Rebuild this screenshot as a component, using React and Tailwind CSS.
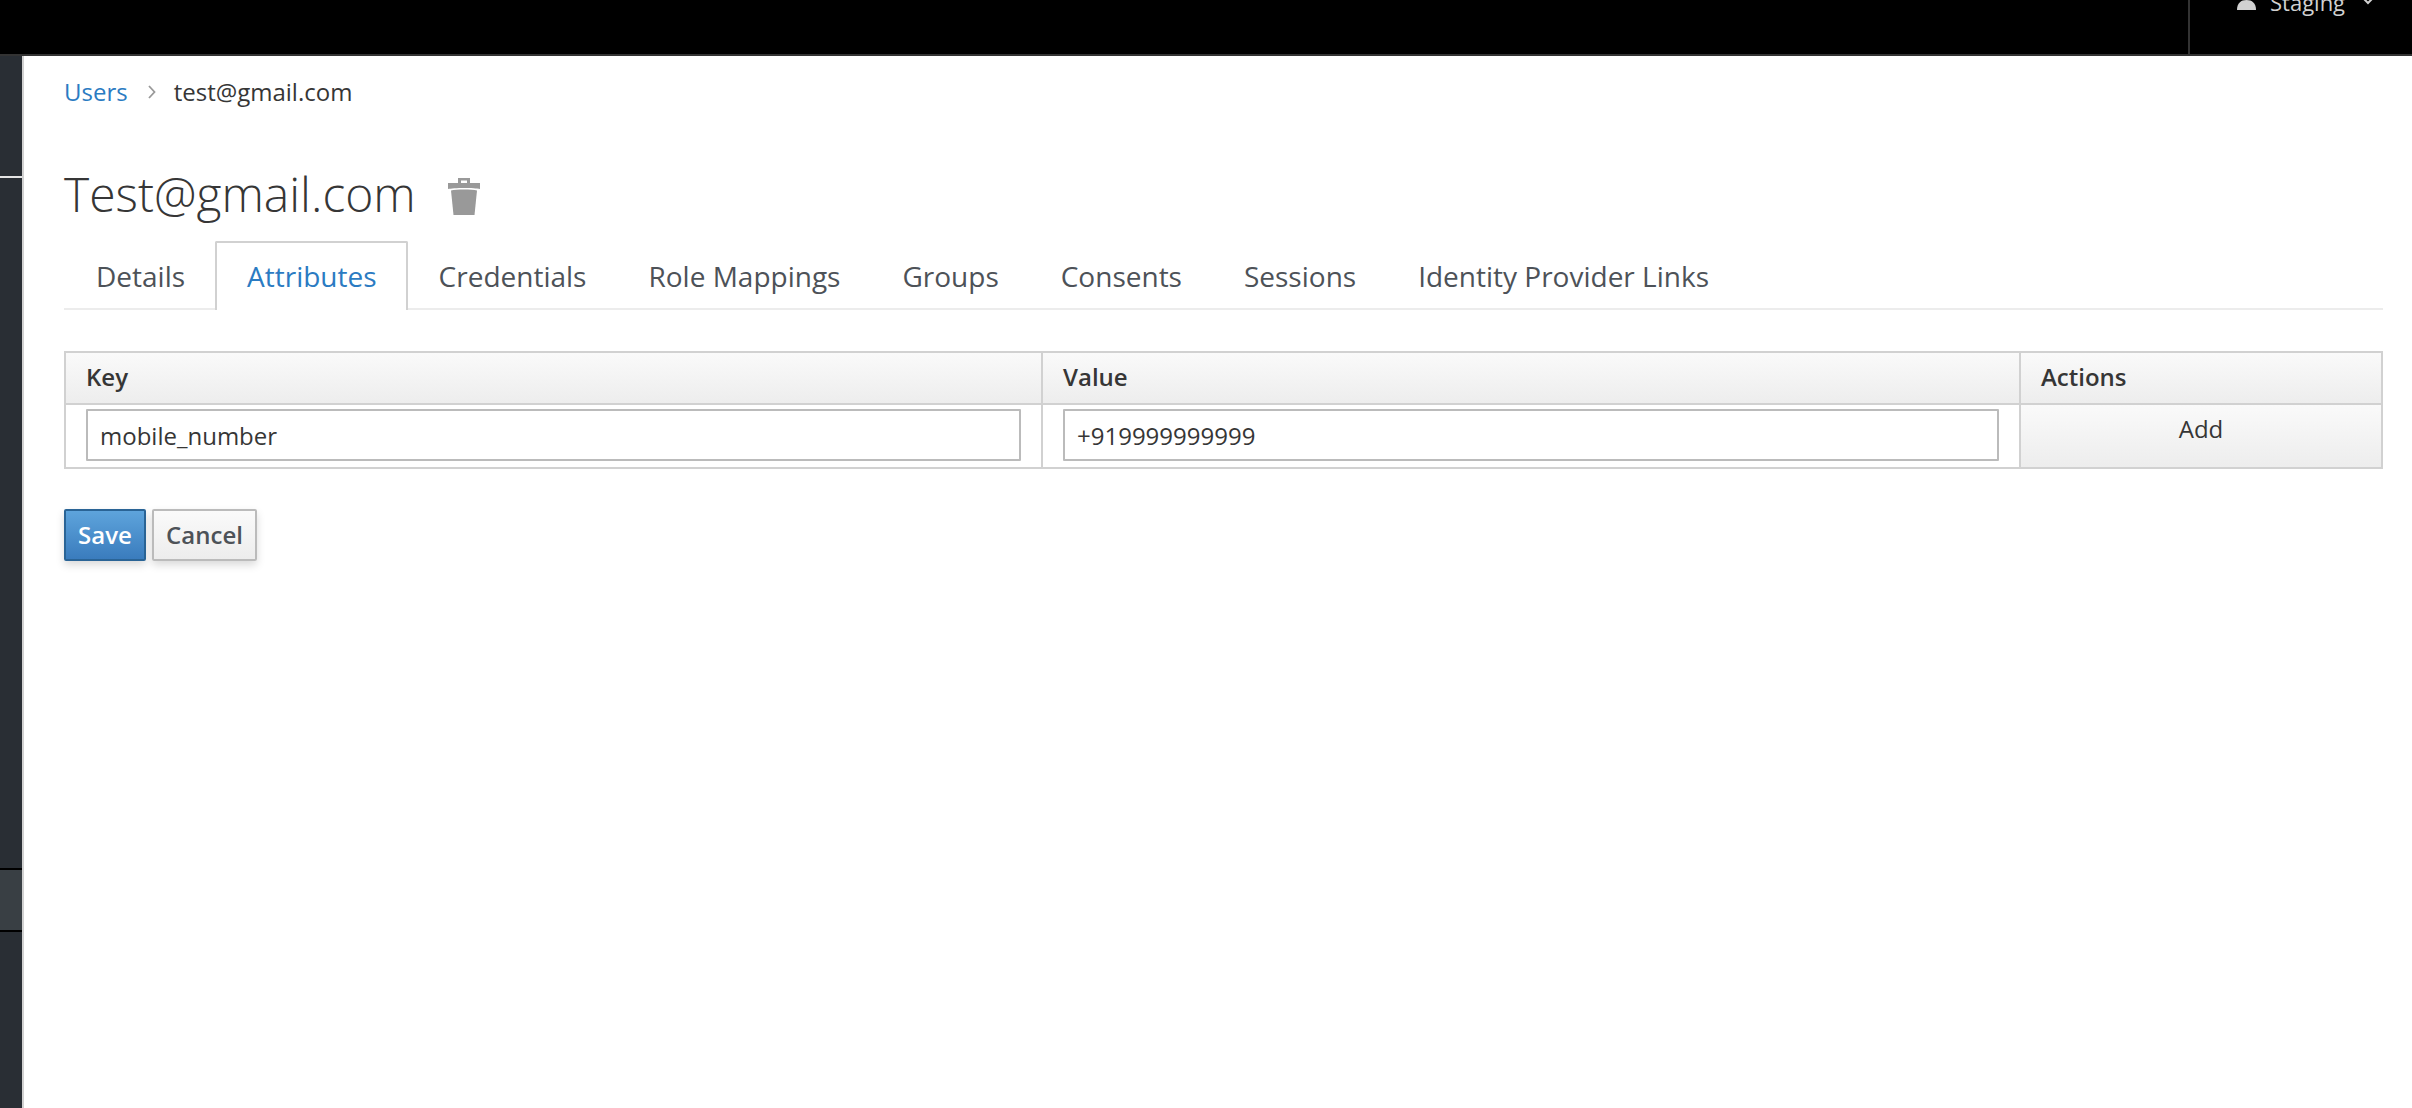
const tabs = [
  "Details",
  "Attributes",
  "Credentials",
  "Role Mappings",
  "Groups",
  "Consents",
  "Sessions",
  "Identity Provider Links",
];

const Sidebar = () => (
  <div className="w-[24px] shrink-0 flex flex-col bg-[#292e34] border-r-2 border-[#d1d1d1]">
    <div className="h-[122px] shrink-0 border-b-2 border-[#e4e4e4]" />
    <div className="h-[690px] shrink-0" />
    <div className="h-[64px] shrink-0 bg-[#393f44] border-y-2 border-black" />
  </div>
);

const Header = () => (
  <div className="h-[56px] shrink-0 flex justify-end overflow-hidden bg-black border-b-2 border-[#333333]">
    <div className="w-[224px] border-l-2 border-[#333333] pl-[47px] text-[#d1d1d1] text-[22px] leading-[32px]">
      <div className="flex items-center -mt-[14px]">
        <svg width="19" height="24" viewBox="0 0 19 24" fill="#d1d1d1" className="mr-[14px] mt-[-8px]">
          <circle cx="9.500" cy="6" r="6" />
          <path d="M0 24c0-7 4-10 9.500-10S19 17 19 24z" />
        </svg>
        <span>Staging</span>
        <svg width="10" height="8" viewBox="0 0 10 8" fill="none" stroke="#d1d1d1" strokeWidth="2" className="ml-[18px] mt-0">
          <path d="M1 1l4 4 4-4" />
        </svg>
      </div>
    </div>
  </div>
);

const TrashIcon = () => (
  <svg width="32" height="37" viewBox="0 0 32 37" className="ml-[32px] mt-[5px]" fill="#999999">
    <path d="M10 0h12v5h10v6C27 9.500 5 9.500 0 11V5h10zM13 2.500v2.500h6V2.500z" fillRule="evenodd" />
    <path d="M3 12.500C8 11.300 24 11.300 29 12.500L26.500 37h-21z" />
  </svg>
);

const App = () => {
  return (
    <div className="h-screen flex flex-col overflow-hidden bg-white font-['Open_Sans',sans-serif] text-[#363636]">
      <Header />
      <div className="flex-1 flex min-h-0">
        <Sidebar />
        <div className="flex-1 pl-[40px] pr-[29px]">
          <div className="flex items-center h-[32px] mt-[20px] text-[24px] leading-[32px]">
            <span className="text-[#2b7bc2]">Users</span>
            <svg width="8" height="14" viewBox="0 0 8 14" fill="none" stroke="#999999" strokeWidth="1.800" className="ml-[20px] mr-[18px]">
              <path d="M1 1l5.500 6L1 13" />
            </svg>
            <span>test@gmail.com</span>
          </div>

          <div className="flex items-center mt-[54px] h-[64px]">
            <h1 className="text-[48px] leading-[64px] font-light">Test@gmail.com</h1>
            <TrashIcon />
          </div>

          <div className="flex mt-[15px] h-[69px] border-b-2 border-[#ececec]">
            {tabs.map((tab, i) =>
              tab === "Attributes" ? (
                <div
                  key={tab}
                  className="h-[69px] pl-[30px] pr-[29px] pt-[14px] text-[28px] leading-[38px] text-[#2b7bc2] bg-white border-x-2 border-t-2 border-[#d1d1d1] rounded-t-[2px]"
                >
                  {tab}
                </div>
              ) : (
                <div
                  key={tab}
                  className={
                    i === 0
                      ? "pl-[32px] pr-[30px] pt-[16px] text-[28px] leading-[38px] text-[#4d5258]"
                      : "px-[31px] pt-[16px] text-[28px] leading-[38px] text-[#4d5258]"
                  }
                >
                  {tab}
                </div>
              )
            )}
          </div>

          <table className="w-full table-fixed border-collapse mt-[41px] text-[24px]">
            <thead>
              <tr className="h-[52px] bg-gradient-to-b from-[#fafafa] to-[#ededed]">
                <th className="w-[977px] border-2 border-[#d1d1d1] pl-[20px] pb-[2px] text-left font-semibold">Key</th>
                <th className="w-[978px] border-2 border-[#d1d1d1] pl-[20px] pb-[2px] text-left font-semibold">Value</th>
                <th className="border-2 border-[#d1d1d1] pl-[20px] pb-[2px] text-left font-semibold">Actions</th>
              </tr>
            </thead>
            <tbody>
              <tr className="h-[64px]">
                <td className="border-2 border-[#d1d1d1] px-[20px] pb-[2px] align-middle">
                  <input
                    readOnly
                    value="mobile_number"
                    className="block w-full h-[52px] border-2 border-[#bbbbbb] rounded-[1px] px-[12px] outline-none"
                  />
                </td>
                <td className="border-2 border-[#d1d1d1] px-[20px] pb-[2px] align-middle">
                  <input
                    readOnly
                    value="+919999999999"
                    className="block w-full h-[52px] border-2 border-[#bbbbbb] rounded-[1px] px-[12px] outline-none"
                  />
                </td>
                <td className="border-2 border-[#d1d1d1] bg-gradient-to-b from-[#fafafa] to-[#ededed] text-center align-top pt-[6px]">
                  Add
                </td>
              </tr>
            </tbody>
          </table>

          <div className="flex gap-[6px] mt-[40px] text-[24px] font-semibold">
            <button className="h-[52px] w-[82px] rounded-[2px] border-2 border-[#2a6496] bg-gradient-to-b from-[#5ea4dc] to-[#3a7cbd] text-white shadow-[0_4px_8px_rgba(0,0,0,0.15)]">
              Save
            </button>
            <button className="h-[52px] w-[105px] rounded-[2px] border-2 border-[#bbbbbb] bg-gradient-to-b from-[#fafafa] to-[#ededed] text-[#4d5258] shadow-[0_4px_8px_rgba(0,0,0,0.15)]">
              Cancel
            </button>
          </div>
        </div>
      </div>
    </div>
  );
};

export default App;
